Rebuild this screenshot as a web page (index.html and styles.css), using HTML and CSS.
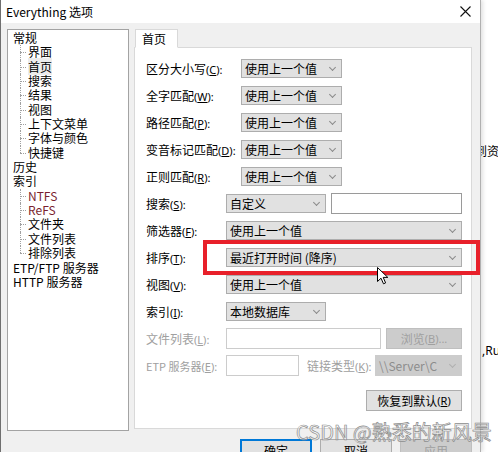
FILE: index.html
```html
<!DOCTYPE html>
<html lang="zh-CN">
<head>
    <meta charset="UTF-8">
    <title>Everything 选项</title>
    <link rel="stylesheet" href="styles.css">
</head>
<body>

<div class="dialog">
    <!-- title bar -->
    <div class="titlebar">
        <span>Everything 选项</span>
        <svg class="close" width="11" height="11" viewBox="0 0 11 11">
            <path d="M0.5 0.5 L10.5 10.5 M10.5 0.5 L0.5 10.5" stroke="#111" stroke-width="1.1" fill="none"/>
        </svg>
    </div>

    <div class="content">
        <!-- left tree -->
        <div class="tree-box">
            <ul class="tree">
                <li>常规
                    <ul>
                        <li>界面</li>
                        <li><span class="current">首页</span></li>
                        <li>搜索</li>
                        <li>结果</li>
                        <li>视图</li>
                        <li>上下文菜单</li>
                        <li>字体与颜色</li>
                        <li>快捷键</li>
                    </ul>
                </li>
                <li>历史</li>
                <li>索引
                    <ul>
                        <li class="vol">NTFS</li>
                        <li class="vol">ReFS</li>
                        <li>文件夹</li>
                        <li>文件列表</li>
                        <li>排除列表</li>
                    </ul>
                </li>
                <li>ETP/FTP 服务器</li>
                <li>HTTP 服务器</li>
            </ul>
        </div>

        <!-- tab page -->
        <div class="tabs">
            <div class="tab-head"><span class="tab">首页</span></div>
            <div class="panel">
                <div class="row wide-label">
                    <label>区分大小写<span class="mn">(<u>C</u>):</span></label>
                    <div class="sel w101"><span>使用上一个值</span><i class="chev"></i></div>
                </div>
                <div class="row wide-label">
                    <label>全字匹配<span class="mn">(<u>W</u>):</span></label>
                    <div class="sel w101"><span>使用上一个值</span><i class="chev"></i></div>
                </div>
                <div class="row wide-label">
                    <label>路径匹配<span class="mn">(<u>P</u>):</span></label>
                    <div class="sel w101"><span>使用上一个值</span><i class="chev"></i></div>
                </div>
                <div class="row wide-label">
                    <label>变音标记匹配<span class="mn">(<u>D</u>):</span></label>
                    <div class="sel w101"><span>使用上一个值</span><i class="chev"></i></div>
                </div>
                <div class="row wide-label">
                    <label>正则匹配<span class="mn">(<u>R</u>):</span></label>
                    <div class="sel w101"><span>使用上一个值</span><i class="chev"></i></div>
                </div>

                <div class="row">
                    <label>搜索<span class="mn">(<u>S</u>):</span></label>
                    <div class="sel w100"><span>自定义</span><i class="chev"></i></div>
                    <div class="field search-field"></div>
                </div>
                <div class="row">
                    <label>筛选器<span class="mn">(<u>F</u>):</span></label>
                    <div class="sel w236"><span>使用上一个值</span><i class="chev"></i></div>
                </div>
                <div class="row">
                    <label>排序<span class="mn">(<u>T</u>):</span></label>
                    <div class="sel w236"><span>最近打开时间 (降序)</span><i class="chev"></i></div>
                </div>
                <div class="row">
                    <label>视图<span class="mn">(<u>V</u>):</span></label>
                    <div class="sel w236"><span>使用上一个值</span><i class="chev"></i></div>
                </div>
                <div class="row">
                    <label>索引<span class="mn">(<u>I</u>):</span></label>
                    <div class="sel w100"><span>本地数据库</span><i class="chev"></i></div>
                </div>

                <div class="row disabled">
                    <label>文件列表<span class="mn">(<u>L</u>):</span></label>
                    <div class="field off list-field"></div>
                    <div class="btn off browse">浏览<span class="mn">(<u>B</u>)...</span></div>
                </div>
                <div class="row disabled">
                    <label class="small">ETP 服务器<span class="mn">(<u>E</u>):</span></label>
                    <div class="field off server-field"></div>
                    <span class="link-label">链接类型<span class="mn">(<u>K</u>):</span></span>
                    <div class="sel off w87"><span>\\Server\C</span><i class="chev"></i></div>
                </div>

                <div class="reset-row">
                    <div class="btn reset">恢复到默认<span class="mn">(<u>R</u>)</span></div>
                </div>
            </div>
        </div>
    </div>

    <!-- dialog buttons -->
    <div class="actions">
        <div class="btn action default">确定</div>
        <div class="btn action">取消</div>
        <div class="btn action off">应用</div>
    </div>
</div>

<!-- whatever sits behind the dialog -->
<div class="backdrop">
    <p class="bg-text first">到资</p>
    <p class="bg-text second">,Ru</p>
</div>

<!-- annotation + watermark over the screenshot -->
<div class="highlight"></div>
<svg class="cursor" width="12" height="18" viewBox="0 0 12 18">
    <path d="M0.5 0.5 L0.5 14.5 L4 11.2 L6.5 16.8 L8.6 15.9 L6.2 10.4 L10.8 10.4 Z" fill="#fff" stroke="#000" stroke-width="1"/>
</svg>
<div class="watermark">CSDN @熟悉的新风景</div>

</body>
</html>
```

FILE: styles.css
```css
body {
    margin: 0;
    width: 498px;
    height: 452px;
    overflow: hidden;
    background-color: #ffffff;
    font-family: "Noto Sans CJK SC", "Noto Sans", sans-serif;
    font-size: 12px;
    color: #000;
    display: flex;
    position: relative;
}

.dialog {
    width: 481px;
    flex: none;
    box-sizing: border-box;
    background-color: #f0f0f0;
    border-left: 1px solid #6f6f6f;
    border-right: 1px solid #b0b0b0;
    box-shadow: 2px 0 4px rgba(0, 0, 0, 0.12);
    display: flex;
    flex-direction: column;
    position: relative;
    z-index: 1;
}

.titlebar {
    height: 23px;
    flex: none;
    background-color: #ffffff;
    display: flex;
    align-items: center;
    justify-content: space-between;
    padding: 0 9px 0 5px;
}

.content {
    display: flex;
    gap: 5px;
    padding: 6px 0 0 6px;
}

/* left tree */
.tree-box {
    width: 122px;
    height: 402px;
    box-sizing: border-box;
    background-color: #ffffff;
    border: 1px solid #a3a3a3;
    padding: 1px 0 0 5px;
}

.tree,
.tree ul {
    list-style: none;
    margin: 0;
    padding: 0;
}

.tree li {
    line-height: 14.35px;
    white-space: nowrap;
}

.tree ul {
    padding-left: 15px;
}

.tree ul li {
    position: relative;
}

.tree ul li::before {
    content: "";
    position: absolute;
    left: -8px;
    top: 0;
    bottom: 0;
    border-left: 1px dotted #a0a0a0;
}

.tree ul li:last-child::before {
    bottom: auto;
    height: 7px;
}

.tree ul li::after {
    content: "";
    position: absolute;
    left: -8px;
    top: 7px;
    width: 6px;
    border-top: 1px dotted #a0a0a0;
}

.tree .current {
    background-color: #ececec;
}

.tree .vol {
    color: #7a1f30;
}

/* tab page */
.tabs {
    width: 338px;
    display: flex;
    flex-direction: column;
}

.tab-head {
    display: flex;
    padding-left: 1px;
}

.tab {
    position: relative;
    z-index: 1;
    width: 41px;
    height: 17px;
    box-sizing: content-box;
    line-height: 17px;
    padding-left: 0;
    text-indent: 6px;
    background-color: #ffffff;
    border: 1px solid #d9d9d9;
    border-bottom: 1px solid #ffffff;
    margin-bottom: -1px;
}

.panel {
    height: 382px;
    box-sizing: border-box;
    background-color: #ffffff;
    border: 1px solid #d9d9d9;
    padding: 10px 9px 0 11px;
}

.row {
    display: flex;
    align-items: center;
    height: 21px;
    margin-bottom: 6px;
}

.row label {
    width: 80px;
    flex: none;
    white-space: nowrap;
}

.wide-label label {
    width: 95px;
}

.mn {
    font-family: "Noto Sans", "Liberation Sans", sans-serif;
    font-size: 11px;
}

.mn u {
    text-underline-offset: 1px;
}

.disabled,
.disabled label {
    color: #a0a0a0;
}

.row label.small {
    font-size: 11px;
}

/* combo boxes */
.sel {
    height: 19px;
    box-sizing: border-box;
    flex: none;
    border: 1px solid #adadad;
    background-color: #e1e1e1;
    display: flex;
    align-items: center;
    justify-content: space-between;
    padding: 0 4px 0 3px;
    white-space: nowrap;
}

.chev {
    width: 4px;
    height: 4px;
    border-right: 1px solid #8a8a8a;
    border-bottom: 1px solid #8a8a8a;
    transform: rotate(45deg);
    margin: 0 2px 3px 0;
}

.w101 { width: 101px; }
.w100 { width: 100px; }
.w236 { width: 236px; }
.w87 { width: 87px; height: 21px; }

.sel.off {
    background-color: #cccccc;
    border-color: #cccccc;
    color: #8c8c8c;
}

.sel.off .chev {
    border-color: #b0b0b0;
}

/* edit boxes */
.field {
    height: 21px;
    box-sizing: border-box;
    flex: none;
    background-color: #ffffff;
    border: 1px solid #9a9a9a;
}

.search-field {
    width: 131px;
    margin-left: 5px;
}

.field.off {
    border-color: #cccccc;
}

.list-field {
    width: 155px;
}

.server-field {
    width: 73px;
}

.link-label {
    width: 69px;
    margin-left: 8px;
    white-space: nowrap;
}

/* buttons */
.btn {
    box-sizing: border-box;
    height: 21px;
    background-color: #e1e1e1;
    border: 1px solid #adadad;
    display: flex;
    align-items: center;
    justify-content: center;
    white-space: nowrap;
}

.btn.off {
    background-color: #cccccc;
    border-color: #bfbfbf;
    color: #a0a0a0;
}

.browse {
    width: 76px;
    margin-left: 5px;
}

.reset-row {
    display: flex;
    justify-content: flex-end;
    margin-top: 14px;
}

.reset {
    width: 96px;
}

.actions {
    display: flex;
    justify-content: flex-end;
    gap: 8px;
    padding: 8px 8px 0 0;
}

.action {
    width: 72px;
    height: 23px;
}

.action.default {
    border: 2px solid #0078d7;
}

/* background window */
.backdrop {
    flex: 1;
    overflow: hidden;
    padding-top: 144px;
}

.bg-text {
    margin: 0;
    font-size: 12px;
    line-height: 14px;
    white-space: nowrap;
}

.bg-text.first {
    margin-left: -6px;
}

.bg-text.second {
    margin-top: 186px;
    margin-left: 1px;
    font-family: "Noto Sans", sans-serif;
}

/* annotation overlays */
.highlight {
    position: absolute;
    left: 203px;
    top: 240px;
    width: 277px;
    height: 35px;
    box-sizing: border-box;
    border: 4px solid #e8202a;
    z-index: 2;
}

.cursor {
    position: absolute;
    left: 377px;
    top: 267px;
    z-index: 3;
}

.watermark {
    position: absolute;
    left: 296px;
    top: 420px;
    font-size: 20px;
    line-height: 24px;
    color: rgba(255, 255, 255, 0.45);
    -webkit-text-stroke: 0.7px #8c8c8c;
    white-space: nowrap;
    z-index: 3;
}
```
